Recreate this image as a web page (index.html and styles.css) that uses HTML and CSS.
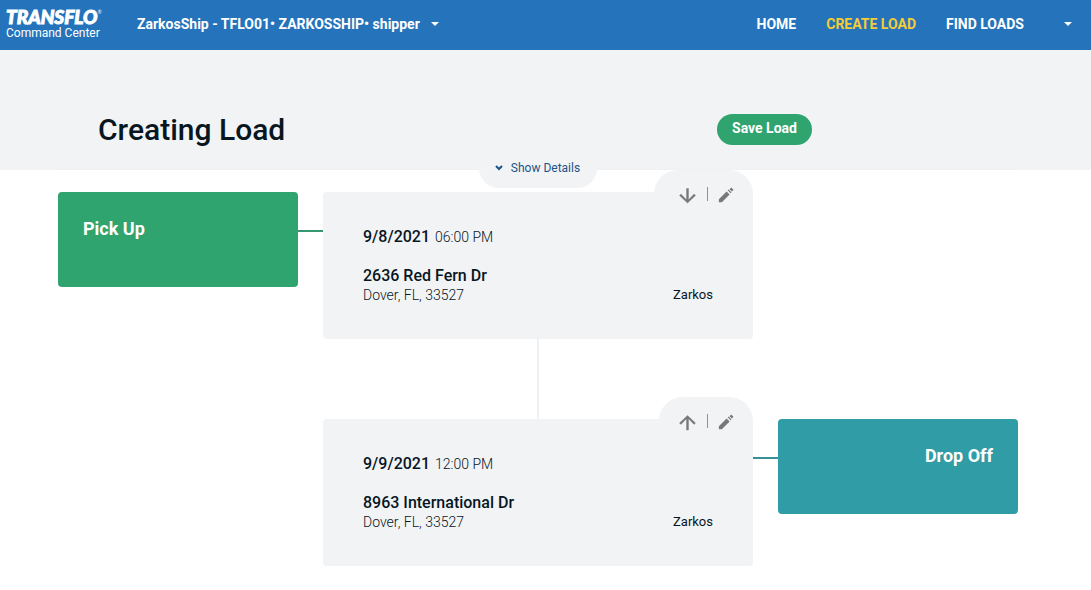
FILE: index.html
```html
<!DOCTYPE html>
<html lang="en">
<head>
<meta charset="utf-8">
<title>Creating Load</title>
<link rel="stylesheet" href="styles.css">
</head>
<body>
<header class="topbar">
  <a class="brand" href="#"><span class="brand-name">TRANSFLO<sup class="brand-mark">®</sup></span><span class="brand-sub">Command Center</span></a>
  <button class="account" type="button">ZarkosShip - TFLO01• ZARKOSSHIP• shipper <span class="caret"></span></button>
  <nav class="nav">
    <a href="#">HOME</a>
    <a class="active" href="#">CREATE LOAD</a>
    <a href="#">FIND LOADS</a>
    <button class="more" type="button" aria-label="More"><span class="caret"></span></button>
  </nav>
</header>
<main>
  <section class="hero">
    <div class="hero-inner">
      <h1>Creating Load</h1>
      <button class="save" type="button">Save Load</button>
    </div>
    <button class="details" type="button">
      <svg width="8" height="6" viewBox="0 0 8 6" aria-hidden="true"><path d="M1 1l3 3 3-3" fill="none" stroke="currentColor" stroke-width="2"/></svg>
      Show Details
    </button>
  </section>
  <section class="stops">
    <article class="stop">
      <div class="kind pickup"><h2>Pick Up</h2></div>
      <div class="link link-pickup"></div>
      <div class="card">
        <div class="tools tools-wide">
          <button type="button" aria-label="Move down"><svg width="24" height="24" viewBox="0 0 24 24"><path stroke="currentColor" stroke-width=".4" d="M20.500 12.500l-1.410-1.410L13.500 16.870V5.500h-2v11.370l-5.580-5.790L4.500 12.500l8 7.500 8-7.500z"/></svg></button>
          <span class="bar"></span>
          <button type="button" aria-label="Edit"><svg width="18" height="18" viewBox="0 0 24 24"><path d="M2.500 17.500V21.500h4L16.800 11.200l-4-4zM14.200 5.800l4 4 1.200-1.200-4-4zM16.800 4.200l3 3 2.200-2.200-3-3z"/></svg></button>
        </div>
        <p class="when"><strong>9/8/2021</strong> <span>06:00 PM</span></p>
        <div class="place">
          <p><strong>2636 Red Fern Dr</strong>Dover, FL, 33527</p>
          <p class="company">Zarkos</p>
        </div>
      </div>
    </article>
    <div class="connector"></div>
    <article class="stop">
      <div class="card">
        <div class="tools">
          <button type="button" aria-label="Move up"><svg width="24" height="24" viewBox="0 0 24 24"><path stroke="currentColor" stroke-width=".4" d="M4.500 13l1.410 1.410L11.500 8.630V20h2V8.630l5.580 5.790L20.500 13l-8-7.500L4.500 13z"/></svg></button>
          <span class="bar"></span>
          <button type="button" aria-label="Edit"><svg width="18" height="18" viewBox="0 0 24 24"><path d="M2.500 17.500V21.500h4L16.800 11.200l-4-4zM14.200 5.800l4 4 1.200-1.200-4-4zM16.800 4.200l3 3 2.200-2.200-3-3z"/></svg></button>
        </div>
        <p class="when"><strong>9/9/2021</strong> <span>12:00 PM</span></p>
        <div class="place">
          <p><strong>8963 International Dr</strong>Dover, FL, 33527</p>
          <p class="company">Zarkos</p>
        </div>
      </div>
      <div class="link link-dropoff"></div>
      <div class="kind dropoff"><h2>Drop Off</h2></div>
    </article>
  </section>
</main>
</body>
</html>
```
FILE: styles.css
```css
* { box-sizing: border-box; }
body { margin: 0; background: #fff; color: #07161f; font: 14px/20px Roboto, "Liberation Sans", sans-serif; }
h1, h2, p { margin: 0; }
button { padding: 0; border: 0; background: none; color: inherit; font: inherit; cursor: pointer; }
a { color: inherit; text-decoration: none; }
svg { display: block; fill: currentColor; }

.topbar { display: flex; align-items: center; height: 50px; padding: 0 19px 2px 6px; background: #2473bb; color: #fff; font-weight: 700; }
.brand { display: flex; flex-direction: column; width: 131px; font-weight: 400; }
.brand-name { display: flex; font: italic 900 19px/18px Lato, sans-serif; -webkit-text-stroke: 1px currentColor; }
.brand-mark { font-size: 5px; line-height: 8px; font-weight: 400; -webkit-text-stroke: 0; }
.brand-sub { font-size: 12px; line-height: 14px; }
.account { display: flex; align-items: center; gap: 8px; white-space: pre; font-weight: 700; }
.nav { display: flex; align-items: center; gap: 30px; margin-left: auto; }
.active { color: #f5cc36; }
.more { display: flex; margin-left: 10px; }
.caret { border: 4px solid transparent; border-top-color: currentColor; border-bottom: 0; }

.hero { position: relative; height: 120px; padding-right: 15px; background: #f2f3f5; }
.hero-inner { display: flex; align-items: flex-start; justify-content: space-between; max-width: 960px; height: 120px; margin: 0 auto; padding: 64px 206px 0 40px; border-bottom: 1px solid #eef0f2; }
h1 { font-size: 30px; line-height: 32px; font-weight: 500; }
.save { width: 95px; height: 31px; padding-bottom: 3px; border-radius: 16px; background: #30a46f; color: #fff; font-weight: 700; }
.details { position: absolute; top: 98px; left: calc(50% - 8px); display: flex; align-items: center; justify-content: center; gap: 8px; width: 118px; height: 40px; border-radius: 20px; background: #f2f3f5; color: #1c5588; font-size: 12px; transform: translateX(-50%); }

.stops { padding: 22px 15px 24px 0; }
.stop { display: grid; grid-template-columns: 240fr 25fr 430fr 25fr 240fr; align-items: start; max-width: 960px; margin: 0 auto; }
.kind { height: 95px; padding: 25px; border-radius: 4px; color: #fff; }
.kind h2 { font-size: 18px; line-height: 24px; font-weight: 700; }
.pickup { background: #30a46f; }
.dropoff { background: #309ca5; text-align: right; }
.link { height: 2px; margin-top: 38px; }
.link-pickup { background: #379770; }
.link-dropoff { background: #38909a; }
.card { position: relative; grid-column: 3; padding: 35px 40px 34px; border-radius: 4px; background: #f2f3f5; }
.card p { font-weight: 300; }
.card strong { display: block; font-size: 16px; font-weight: 500; }
.card .when { display: flex; align-items: baseline; gap: 5px; }
.place { display: flex; align-items: flex-end; justify-content: space-between; margin-top: 20px; }
.place strong { line-height: 18px; }
.card .company { font-size: 13px; font-weight: 400; }
.connector { width: 2px; height: 80px; margin: 0 auto; background: #eef0f2; }
.tools { position: absolute; top: -22px; right: 0; display: flex; align-items: center; justify-content: flex-end; gap: 8px; width: 94px; height: 50px; padding-right: 18px; border-radius: 24px 24px 0 0; background: #f2f3f5; color: #77787a; }
.tools-wide { width: 99px; }
.bar { width: 1px; height: 14px; margin: 0 1px 2px 0; background: #6f9cbe; }
```
